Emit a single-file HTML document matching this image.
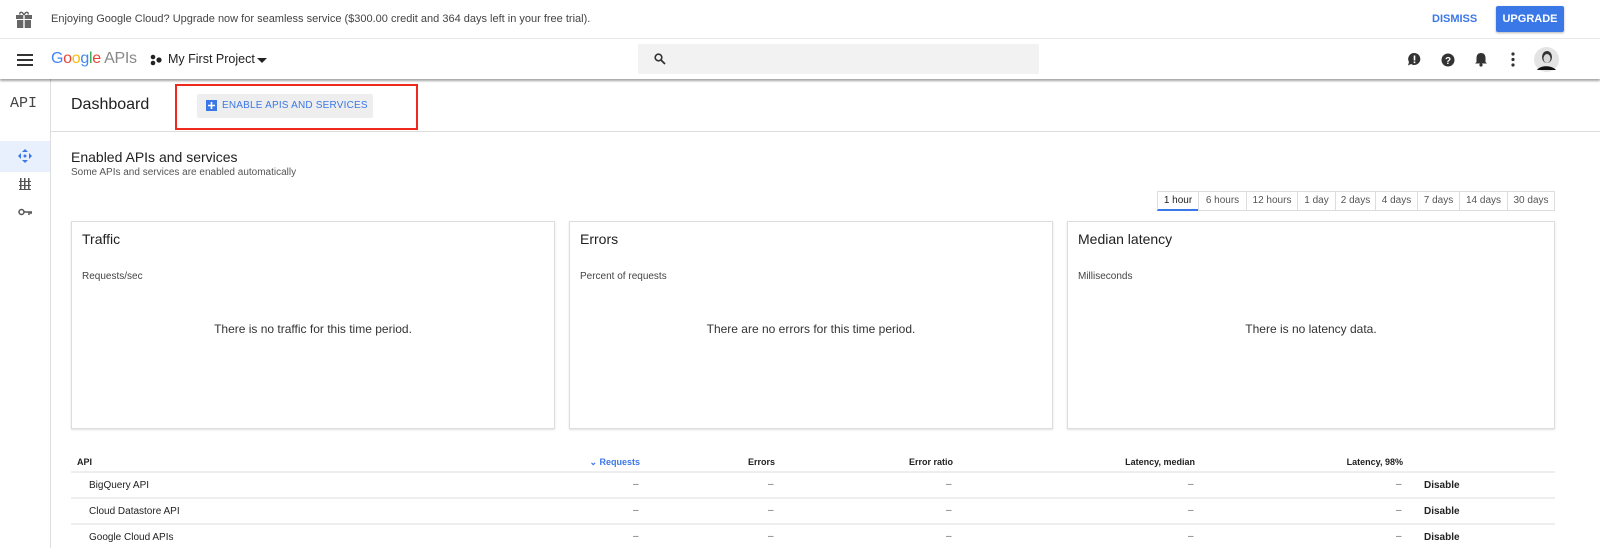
<!DOCTYPE html>
<html><head><meta charset="utf-8"><style>
*{box-sizing:border-box;margin:0;padding:0}
body{width:1600px;height:548px;overflow:hidden;background:#fff;font-family:"Liberation Sans",Arial,sans-serif;color:#212121;position:relative}
.a{position:absolute}
.banner{left:0;top:0;width:1600px;height:39px;border-bottom:1px solid #e8e8e8;background:#fff}
.hdr{left:0;top:40px;width:1600px;height:39px;background:#fff;box-shadow:0 2px 2px rgba(0,0,0,.35);z-index:2}
.side{left:0;top:79px;width:51px;height:469px;border-right:1px solid #ddd;background:#fff}
.card{top:221px;height:208px;border:1px solid #ddd;box-shadow:0 1px 2px rgba(0,0,0,.12)}
.card h3{position:absolute;left:10px;top:9px;font-size:14px;font-weight:normal;color:#212121}
.card .s{position:absolute;left:10px;top:49px;font-size:10px;color:#444}
.card .m{position:absolute;left:0;right:0;top:100px;text-align:center;font-size:12px;color:#333}
.tb{top:191px;height:20px;border:1px solid #ddd;font-size:10px;color:#555;line-height:18px;text-align:center}
.th{font-size:9px;font-weight:bold;color:#222;top:457px}
.r{text-align:right}
.line{left:71px;width:1484px;height:2px;background:#eee}
.cell{font-size:10px;color:#222}
.dash{font-size:10px;color:#666}
</style></head><body>
<div class="a banner"></div>
<svg class="a" style="left:15px;top:11px" width="18" height="17" viewBox="0 0 18 17"><rect x="1" y="4" width="16" height="4" fill="#666"/><rect x="2" y="9" width="14" height="8" fill="#666"/><rect x="8.3" y="4" width="1.4" height="13" fill="#fff"/><rect x="1" y="8" width="16" height="1" fill="#fff"/><path d="M9 4C7 0 4 1 5 3.5M9 4c2-4 5-3 4-.5" stroke="#666" stroke-width="1.5" fill="none"/></svg>
<div class="a" style="left:51px;top:13px;font-size:11px;color:#444">Enjoying Google Cloud? Upgrade now for seamless service ($300.00 credit and 364 days left in your free trial).</div>
<div class="a" style="left:1432px;top:13px;font-size:11px;font-weight:bold;color:#3b78e7">DISMISS</div>
<div class="a" style="left:1496px;top:6px;width:68px;height:26px;background:#3b78e7;border-radius:2px;color:#fff;font-size:11px;font-weight:bold;text-align:center;line-height:26px;box-shadow:0 1px 2px rgba(0,0,0,.3)">UPGRADE</div>
<div class="a hdr">
<svg class="a" style="left:17px;top:14px" width="16" height="12"><rect y="0" width="16" height="2" fill="#333"/><rect y="5" width="16" height="2" fill="#333"/><rect y="10" width="16" height="2" fill="#333"/></svg>
<div class="a" style="left:51px;top:10px;font-size:16px;letter-spacing:-0.3px"><span style="color:#4285f4">G</span><span style="color:#ea4335">o</span><span style="color:#fbbc05">o</span><span style="color:#4285f4">g</span><span style="color:#34a853">l</span><span style="color:#ea4335">e</span> <span style="color:#888">APIs</span></div>
<svg class="a" style="left:150px;top:14px" width="12" height="12"><circle cx="3" cy="3" r="2.3" fill="#222"/><circle cx="3" cy="9" r="2.3" fill="#222"/><circle cx="9" cy="6" r="2.6" fill="#222"/></svg>
<div class="a" style="left:168px;top:12px;font-size:12.5px;color:#222">My First Project</div>
<svg class="a" style="left:257px;top:18px" width="10" height="5"><path d="M0 0h10L5 5z" fill="#222"/></svg>
<div class="a" style="left:638px;top:4px;width:401px;height:30px;background:#f2f2f2;border-radius:2px"></div>
<svg class="a" style="left:654px;top:13px" width="12" height="12"><circle cx="4.5" cy="4.5" r="3.3" stroke="#333" stroke-width="1.6" fill="none"/><path d="M7 7l4 4" stroke="#333" stroke-width="1.8"/></svg>
<svg class="a" style="left:1407px;top:12px" width="15" height="15" viewBox="0 0 15 15"><path d="M7.5 1a6 6 0 1 1-3.5 11L1 13.5 2 10A6 6 0 0 1 7.5 1z" fill="#333"/><rect x="6.7" y="3.5" width="1.6" height="5" fill="#fff"/><rect x="6.7" y="9.5" width="1.6" height="1.6" fill="#fff"/></svg>
<svg class="a" style="left:1441px;top:13px" width="14" height="14"><circle cx="7" cy="7" r="6.5" fill="#333"/><text x="7" y="11" font-size="10" font-weight="bold" fill="#fff" text-anchor="middle" font-family="Liberation Sans">?</text></svg>
<svg class="a" style="left:1475px;top:12px" width="12" height="15"><path d="M6 1c3 0 4.5 2 4.5 5v4l1.5 1.5H0L1.5 10V6C1.5 3 3 1 6 1z" fill="#333"/><circle cx="6" cy="13" r="1.6" fill="#333"/></svg>
<svg class="a" style="left:1511px;top:12px" width="4" height="15"><circle cx="2" cy="2" r="1.6" fill="#333"/><circle cx="2" cy="7.5" r="1.6" fill="#333"/><circle cx="2" cy="13" r="1.6" fill="#333"/></svg>
<svg class="a" style="left:1534px;top:7px" width="25" height="25"><circle cx="12.5" cy="12.5" r="12.5" fill="#e4e4e4"/><ellipse cx="13" cy="10" rx="5" ry="6" fill="#333"/><ellipse cx="13" cy="11.5" rx="3.5" ry="4.5" fill="#d8d8d8"/><path d="M3 23c3-5 15-5 19 0z" fill="#111"/></svg>
</div>
<div class="a side"></div>
<div class="a" style="left:10px;top:95px;font-family:'Liberation Mono',monospace;font-size:15px;color:#444">API</div>
<div class="a" style="left:0;top:141px;width:50px;height:31px;background:#e8f0fe"></div>
<svg class="a" style="left:18px;top:149px" width="14" height="14"><g fill="#3b78e7"><path d="M7 0l3 3H4z"/><path d="M7 14l3-3H4z"/><path d="M0 7l3-3v6z"/><path d="M14 7l-3-3v6z"/><circle cx="7" cy="7" r="1.5"/></g></svg>
<svg class="a" style="left:19px;top:178px" width="12" height="12"><g fill="#555"><rect x="1" y="0" width="1.5" height="12"/><rect x="5" y="0" width="1.5" height="12"/><rect x="9" y="0" width="1.5" height="12"/><rect x="0" y="3" width="12" height="1"/><rect x="0" y="7" width="12" height="1"/><rect x="0" y="11" width="12" height="1"/></g></svg>
<svg class="a" style="left:18px;top:208px" width="14" height="8"><circle cx="3.5" cy="4" r="2.5" stroke="#555" stroke-width="1.5" fill="none"/><path d="M6 4h8M11 4v3M13 4v2" stroke="#555" stroke-width="1.5"/></svg>
<div class="a" style="left:51px;top:131px;width:1549px;height:1px;background:#ddd"></div>
<div class="a" style="left:71px;top:96px;font-size:16px;color:#212121">Dashboard</div>
<div class="a" style="left:175px;top:84px;width:243px;height:46px;border:2px solid #f0291e"></div>
<div class="a" style="left:197px;top:94px;width:176px;height:24px;background:#eee;border-radius:2px"></div>
<svg class="a" style="left:206px;top:100px" width="11" height="11"><rect width="11" height="11" fill="#3b78e7"/><path d="M5.5 2v7M2 5.5h7" stroke="#fff" stroke-width="1.6"/></svg>
<div class="a" style="left:222px;top:100px;font-size:10px;color:#3b78e7;letter-spacing:0.2px">ENABLE APIS AND SERVICES</div>
<div class="a" style="left:71px;top:149px;font-size:14px;color:#212121">Enabled APIs and services</div>
<div class="a" style="left:71px;top:167px;font-size:10px;color:#555">Some APIs and services are enabled automatically</div>
<div class="a tb" style="left:1157px;width:42px;color:#222;border-bottom:2px solid #3b78e7">1 hour</div>
<div class="a tb" style="left:1198px;width:49px">6 hours</div>
<div class="a tb" style="left:1246px;width:52px">12 hours</div>
<div class="a tb" style="left:1297px;width:39px">1 day</div>
<div class="a tb" style="left:1335px;width:41px">2 days</div>
<div class="a tb" style="left:1375px;width:43px">4 days</div>
<div class="a tb" style="left:1417px;width:43px">7 days</div>
<div class="a tb" style="left:1459px;width:49px">14 days</div>
<div class="a tb" style="left:1507px;width:48px">30 days</div>
<div class="a card" style="left:71px;width:484px"><h3>Traffic</h3><div class="s">Requests/sec</div><div class="m">There is no traffic for this time period.</div></div>
<div class="a card" style="left:569px;width:484px"><h3>Errors</h3><div class="s">Percent of requests</div><div class="m">There are no errors for this time period.</div></div>
<div class="a card" style="left:1067px;width:488px"><h3>Median latency</h3><div class="s">Milliseconds</div><div class="m">There is no latency data.</div></div>
<div class="a th" style="left:77px">API</div>
<div class="a th r" style="left:540px;width:100px;color:#3b78e7">&#8964; Requests</div>
<div class="a th r" style="left:675px;width:100px">Errors</div>
<div class="a th r" style="left:853px;width:100px">Error ratio</div>
<div class="a th r" style="left:1045px;width:150px">Latency, median</div>
<div class="a th r" style="left:1253px;width:150px">Latency, 98%</div>
<div class="a line" style="top:471px"></div>
<div class="a line" style="top:497px"></div>
<div class="a line" style="top:523px"></div>
<div class="a cell" style="left:89px;top:480px">BigQuery API</div>
<div class="a cell" style="left:89px;top:506px">Cloud Datastore API</div>
<div class="a cell" style="left:89px;top:532px">Google Cloud APIs</div>
<div class="a cell" style="left:1424px;top:480px;font-weight:bold">Disable</div>
<div class="a cell" style="left:1424px;top:506px;font-weight:bold">Disable</div>
<div class="a cell" style="left:1424px;top:532px;font-weight:bold">Disable</div>
<div class="a dash" style="left:633px;top:479px">–</div><div class="a dash" style="left:768px;top:479px">–</div><div class="a dash" style="left:946px;top:479px">–</div><div class="a dash" style="left:1188px;top:479px">–</div><div class="a dash" style="left:1396px;top:479px">–</div>
<div class="a dash" style="left:633px;top:505px">–</div><div class="a dash" style="left:768px;top:505px">–</div><div class="a dash" style="left:946px;top:505px">–</div><div class="a dash" style="left:1188px;top:505px">–</div><div class="a dash" style="left:1396px;top:505px">–</div>
<div class="a dash" style="left:633px;top:531px">–</div><div class="a dash" style="left:768px;top:531px">–</div><div class="a dash" style="left:946px;top:531px">–</div><div class="a dash" style="left:1188px;top:531px">–</div><div class="a dash" style="left:1396px;top:531px">–</div>
</body></html>
